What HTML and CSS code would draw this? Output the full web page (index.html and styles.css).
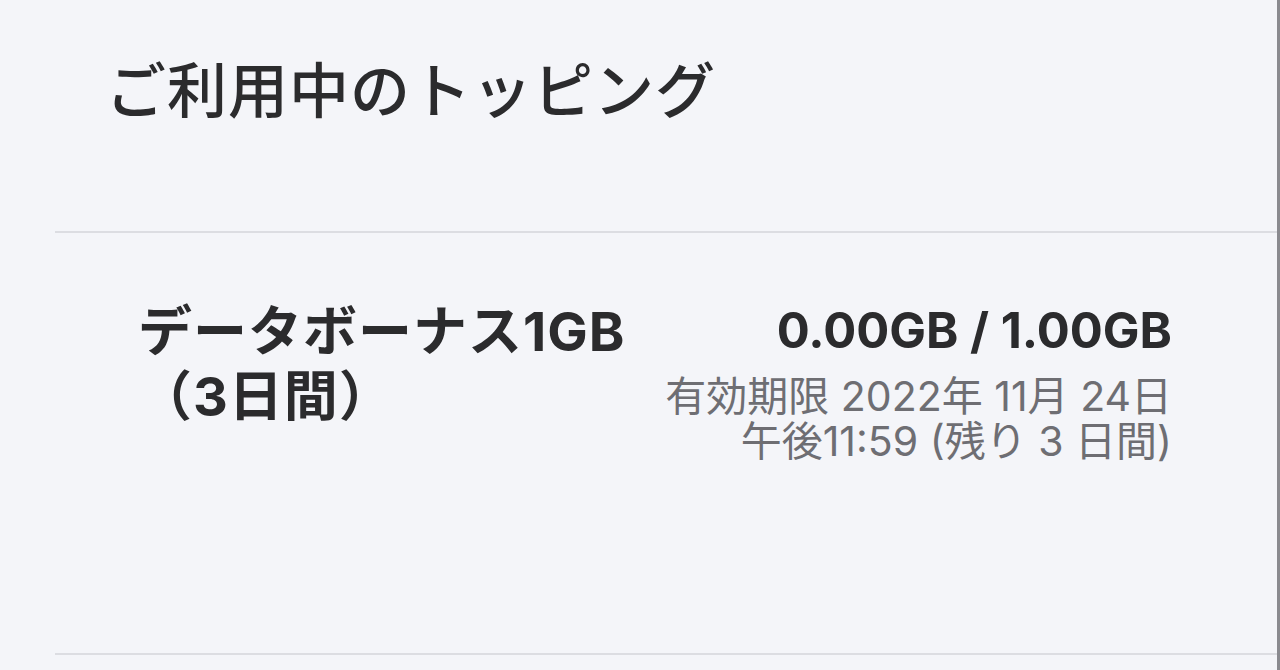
FILE: index.html
```html
<!DOCTYPE html>
<html lang="ja">
<head>
<meta charset="utf-8">
<link rel="stylesheet" href="styles.css">
</head>
<body>
<div class="page">
  <header class="header">
    <h1 class="title">ご利用中のトッピング</h1>
  </header>
  <section class="list">
    <div class="item">
      <div class="name">データボーナス1GB<br>（3日間）</div>
      <div class="info">
        <div class="usage">0.00GB / 1.00GB</div>
        <div class="expiry">有効期限 2022年 11月 24日<br>午後11:59 (残り 3 日間)</div>
      </div>
    </div>
  </section>
</div>
</body>
</html>
```
FILE: styles.css
```css
html, body {
  margin: 0;
  padding: 0;
}
body {
  width: 1280px;
  height: 670px;
  overflow: hidden;
  background: #f4f5f9;
  font-family: "Inter", "Noto Sans CJK JP", sans-serif;
  color: #2b2b2d;
}
.page {
  height: 670px;
  box-sizing: border-box;
  border-right: 3px solid #8a8a8f;
  border-top-left-radius: 12px;
}
.header {
  height: 231px;
  box-sizing: border-box;
  padding: 55px 0 0 106px;
}
.title {
  margin: 0;
  font-size: 60px;
  line-height: 72px;
  font-weight: 500;
  letter-spacing: 1px;
}
.list {
  margin-left: 55px;
  border-top: 2px solid #dcdde2;
}
.item {
  height: 422px;
  box-sizing: border-box;
  display: flex;
  justify-content: space-between;
  align-items: flex-start;
  padding: 66px 105px 0 83px;
  border-bottom: 2px solid #dcdde2;
}
.name {
  font-size: 54px;
  line-height: 65px;
  font-weight: 700;
  letter-spacing: 1px;
}
.info {
  text-align: right;
}
.usage {
  font-size: 49px;
  line-height: 60px;
  font-weight: 700;
  margin-top: 2px;
}
.expiry {
  margin-top: 13px;
  font-size: 41px;
  line-height: 45px;
  font-weight: 400;
  color: #6e6e73;
}
```
